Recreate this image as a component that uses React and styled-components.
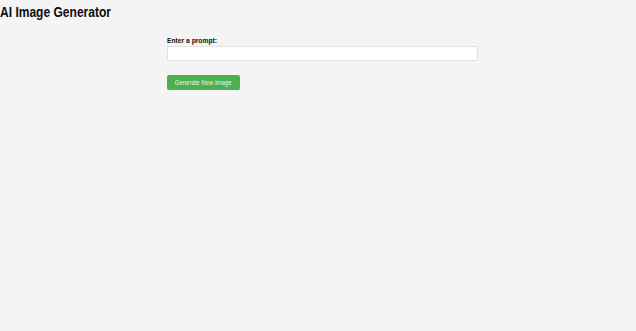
import React from "react";
import styled, { createGlobalStyle } from "styled-components";

const GlobalStyle = createGlobalStyle`
  body {
    margin: 0;
    background: #f4f4f4;
    font-family: "Liberation Sans", Arial, sans-serif;
  }
`;

const Page = styled.div`
  min-height: 100vh;
`;

/* the capture's text runs narrow, so squeeze it to match */
const Narrow = styled.span`
  display: inline-block;
  white-space: nowrap;
  transform: scaleX(${(p) => p.$squeeze || 0.86});
  transform-origin: ${(p) => (p.$center ? "center" : "left")} center;
`;

const Title = styled.h1`
  margin: 0;
  padding-top: 4px;
  font-size: 14.5px;
  line-height: 16px;
  font-weight: 700;
  color: #0d0d0d;
`;

const Form = styled.div`
  width: 311px;
  margin: 16px 0 0 167px;
  display: flex;
  flex-direction: column;
`;

const Label = styled.label`
  font-size: 8px;
  line-height: 9px;
  font-weight: 700;
  color: #111;
  margin-bottom: 1px;
`;

const Input = styled.input`
  box-sizing: border-box;
  height: 15px;
  width: 100%;
  border: 1px solid #e2e2e2;
  border-radius: 2px;
  background: #fff;
  margin: 0 0 14px;
`;

const Button = styled.button`
  align-self: flex-start;
  width: 73px;
  height: 15px;
  border: none;
  border-radius: 2px;
  background: #4caf50;
  color: #e8f5e8;
  font-family: inherit;
  font-size: 7.2px;
  padding: 0;
  display: flex;
  align-items: center;
  justify-content: center;
`;

export default function App() {
  return (
    <Page>
      <GlobalStyle />
      <Title>
        <Narrow $squeeze={0.83}>AI Image Generator</Narrow>
      </Title>
      <Form>
        <Label>
          <Narrow $squeeze={0.84}>Enter a prompt:</Narrow>
        </Label>
        <Input type="text" />
        <Button>
          <Narrow $center $squeeze={0.83}>Generate New Image</Narrow>
        </Button>
      </Form>
    </Page>
  );
}
